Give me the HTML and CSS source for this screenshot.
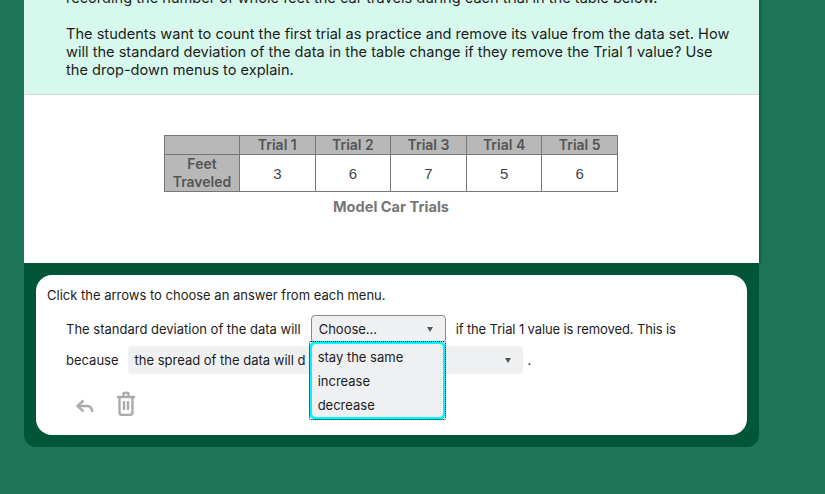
FILE: index.html
```html
<!DOCTYPE html>
<html>
<head>
  <meta charset="UTF-8">
  <title>Model Car Trials</title>
  <link rel="stylesheet" href="styles.css">
</head>
<body>
  <div class="sheet">
    <div class="prompt">
      <p>recording the number of whole feet the car travels during each trial in the table below.</p>
      <p>The students want to count the first trial as practice and remove its value from the data set. How<br>will the standard deviation of the data in the table change if they remove the Trial 1 value? Use<br>the drop-down menus to explain.</p>
    </div>

    <div class="figure">
      <table class="trials">
        <tr>
          <th class="corner"></th>
          <th>Trial 1</th>
          <th>Trial 2</th>
          <th>Trial 3</th>
          <th>Trial 4</th>
          <th>Trial 5</th>
        </tr>
        <tr>
          <th>Feet<br>Traveled</th>
          <td>3</td>
          <td>6</td>
          <td>7</td>
          <td>5</td>
          <td>6</td>
        </tr>
      </table>
      <div class="caption">Model Car Trials</div>
    </div>

    <div class="answer">
      <div class="answer-card">
        <div class="hint">Click the arrows to choose an answer from each menu.</div>
        <div class="line">
          <span>The standard deviation of the data will</span>
          <div class="drop-wrap">
            <div class="drop drop-open">
              <span>Choose...</span>
              <i class="arrow"></i>
            </div>
            <ul class="menu">
              <li>stay the same</li>
              <li>increase</li>
              <li>decrease</li>
            </ul>
          </div>
          <span class="after-drop">if the Trial 1 value is removed. This is</span>
        </div>
        <div class="line line-two">
          <span>because</span>
          <div class="drop drop-wide">
            <span>the spread of the data will d</span>
            <i class="arrow"></i>
          </div>
          <span class="dot">.</span>
        </div>
        <div class="tools">
          <svg width="20" height="16" viewBox="0 -3 20 16" fill="none" stroke="#ababab" stroke-width="2.4">
            <path d="M8.5 1.5 L2.5 7 L8.5 12.5"/>
            <path d="M2.5 7 H12 C15.5 7 17.3 9.2 17.3 14.5"/>
          </svg>
          <svg width="20" height="25" viewBox="0 0 20 25" fill="none" stroke="#ababab" stroke-width="2.4">
            <path d="M1 6 H19"/>
            <path d="M7.5 5 V3 C7.5 1.4 12.5 1.4 12.5 3 V5"/>
            <path d="M3.5 6 V21 C3.5 23 4.5 24 6.5 24 H13.5 C15.5 24 16.5 23 16.5 21 V6"/>
            <path d="M8 10 V19 M12 10 V19"/>
          </svg>
        </div>
      </div>
    </div>
  </div>
</body>
</html>
```

FILE: styles.css
```css
html, body {
  height: 100%;
}
body {
  margin: 0;
  overflow: hidden;
  background: #1b7556;
  color: #1c1c1c;
  font-family: 'Inter', 'Noto Sans', sans-serif;
}
.sheet {
  width: 735px;
  margin: -11px 0 0 24px;
}

.prompt {
  background: #d7f9ed;
  border-bottom: 1px solid #e2e6e4;
  padding: 0 24px 15px 42px;
  font-size: 14.6px;
  line-height: 18px;
  height: 90px;
  box-shadow: 2px 0 2px rgba(0, 0, 0, 0.2);
}
.prompt p {
  margin: 0 0 18px;
  white-space: nowrap;
}

.figure {
  background: #fff;
  height: 168px;
  padding-top: 40px;
  box-sizing: border-box;
  box-shadow: 2px 0 2px rgba(0, 0, 0, 0.2);
}
.trials {
  border-collapse: collapse;
  margin-left: 140px;
  width: 454px;
  table-layout: fixed;
}
.trials .corner {
  width: 74px;
}
.trials th, .trials td {
  border: 1px solid #777;
  text-align: center;
  padding: 0;
  font-size: 14px;
}
.trials th {
  background: #b8b8b8;
  color: #555;
  font-weight: 600;
  line-height: 18px;
}
.trials td {
  color: #444;
  font-family: 'Liberation Sans', sans-serif;
  font-size: 15px;
}
.caption {
  margin: 6px 0 0 0;
  width: 734px;
  text-align: center;
  color: #777;
  font-size: 14.6px;
  font-weight: 700;
  line-height: 18px;
}

.answer {
  background: #015638;
  padding: 12px;
  border-radius: 0 0 12px 12px;
}
.answer-card {
  background: #fff;
  border-radius: 16px;
  height: 160px;
  box-sizing: border-box;
  padding: 12px 0 0 11px;
  font-size: 13px;
}
.hint {
  line-height: 16px;
}
.line {
  display: flex;
  align-items: center;
  gap: 10px;
  margin: 12px 0 0 19px;
  height: 28px;
  white-space: nowrap;
}
.line-two {
  margin-top: 3px;
  gap: 9px;
}
.after-drop {
  letter-spacing: -0.12px;
}
.dot {
  margin-left: -4px;
}
.drop-wrap {
  position: relative;
}
.drop {
  display: flex;
  align-items: center;
  justify-content: space-between;
  box-sizing: border-box;
  height: 28px;
  background: #eff0f2;
  border-radius: 4px;
  padding: 0 12px 0 7px;
}
.drop-open {
  width: 135px;
  border: 1px solid #8a8a8a;
}
.drop-wide {
  width: 395px;
}
.arrow {
  width: 0;
  height: 0;
  border-left: 3.5px solid transparent;
  border-right: 3.5px solid transparent;
  border-top: 5px solid #555;
}
/* open list sits over the second menu, with the focus ring round it */
.menu {
  position: absolute;
  left: 1px;
  top: 29px;
  width: 131px;
  height: 73px;
  box-sizing: border-box;
  margin: 0;
  padding: 0;
  list-style: none;
  background: #eff0f2;
  border-radius: 4px;
  outline: 3px solid #00f5ff;
  z-index: 2;
}
.menu::after {
  content: "";
  position: absolute;
  inset: -3px;
  border: 1px dotted #000;
  border-radius: 2px;
  pointer-events: none;
}
.menu li {
  height: 24px;
  line-height: 24px;
  padding-left: 6px;
  position: relative;
  top: 1px;
}
.tools {
  display: flex;
  align-items: center;
  gap: 21px;
  margin: 17px 0 0 28px;
}
```
